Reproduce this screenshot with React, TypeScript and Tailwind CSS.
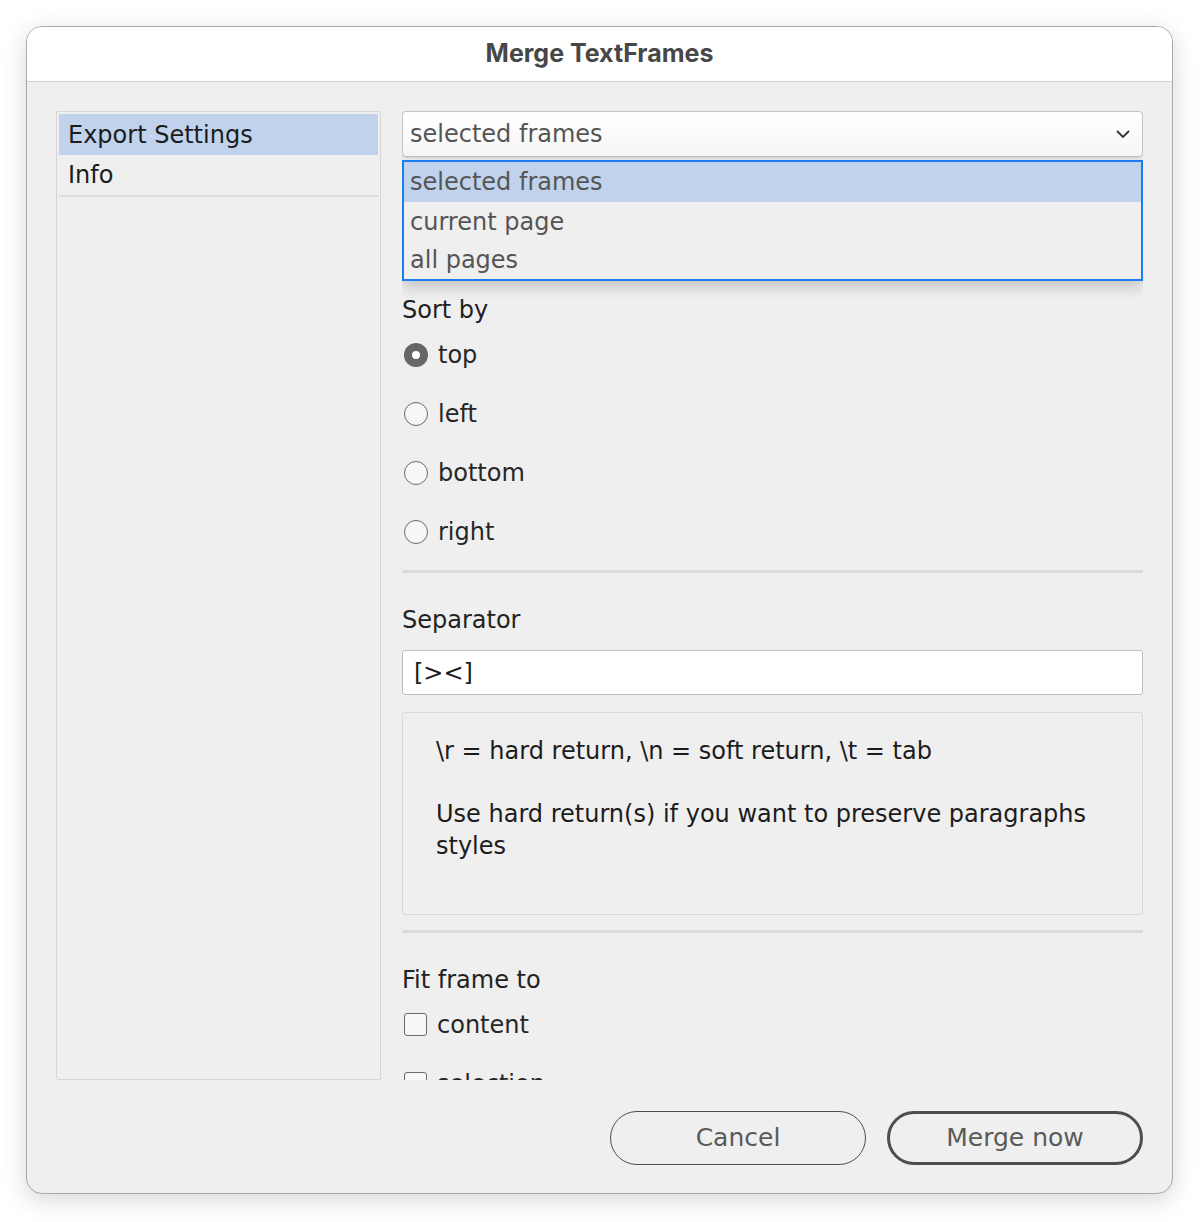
import React from "react";

const font = { fontFamily: '"DejaVu Sans", Verdana, sans-serif' };

const Radio = ({ checked, label }: { checked?: boolean; label: string }) => (
  <div className="h-[59px] shrink-0 flex items-center gap-[10px] pl-[2px]">
    {checked ? (
      <div className="w-[24px] h-[24px] rounded-full bg-[#666666] flex items-center justify-center">
        <div className="w-[8px] h-[8px] rounded-full bg-white" />
      </div>
    ) : (
      <div className="w-[24px] h-[24px] rounded-full border-[1.5px] border-[#6a6a6a] bg-[#f7f7f7]" />
    )}
    <span className="text-[24px] text-[#262626]">{label}</span>
  </div>
);

const Check = ({ label }: { label: string }) => (
  <div className="h-[59px] shrink-0 flex items-center gap-[10px] pl-[2px]">
    <div className="w-[23px] h-[23px] rounded-[3px] border-[1.5px] border-[#6a6a6a] bg-[#f7f7f7]" />
    <span className="text-[24px] text-[#262626]">{label}</span>
  </div>
);

const Label = ({ children }: { children: React.ReactNode }) => (
  <div className="h-[30px] flex items-center text-[24px] text-[#222222]">{children}</div>
);

const Rule = () => <div className="h-[3px] bg-[#dadada]" />;

export default function App() {
  return (
    <div className="w-[1200px] h-[1222px] bg-white pt-[26px] pl-[26px]" style={font}>
      <div className="w-[1147px] h-[1168px] rounded-[16px] border border-[#a9a9a9] bg-[#efefef] overflow-hidden shadow-[0_6px_24px_rgba(0,0,0,0.16)] flex flex-col">
        {/* title bar */}
        <div className="h-[55px] shrink-0 bg-white border-b border-[#d2d2d2] flex items-center justify-center">
          <span className="text-[25px] font-bold text-[#474747]" style={{ fontFamily: "Inter, sans-serif" }}>
            Merge TextFrames
          </span>
        </div>

        <div className="flex-1 pt-[29px] px-[29px] flex flex-col">
          <div className="h-[969px] shrink-0 flex gap-[21px]">
            {/* sidebar */}
            <div className="w-[325px] shrink-0 border border-[#d5d5d5] rounded-[2px] p-[2px]">
              <div className="h-[41px] bg-[#c0d2ec] flex items-center pl-[9px] text-[24px] text-[#1c1c1c]">
                Export Settings
              </div>
              <div className="h-[42px] border-b-2 border-[#dcdcdc] flex items-center pl-[9px] text-[24px] text-[#1c1c1c]">
                Info
              </div>
            </div>

            {/* main column */}
            <div className="flex-1 relative overflow-hidden flex flex-col">
              <div className="h-[46px] shrink-0 rounded-[4px] border border-[#c3c3c3] bg-gradient-to-b from-white to-[#f6f6f6] shadow-[0_1px_2px_rgba(0,0,0,0.12)] flex items-center justify-between pl-[7px] pr-[11px]">
                <span className="text-[24px] text-[#555555]">selected frames</span>
                <svg width="16" height="10" viewBox="0 0 16 10">
                  <path d="M2 2 L8 8 L14 2" fill="none" stroke="#333" strokeWidth="1.8" />
                </svg>
              </div>

              <div className="mt-[138px] shrink-0">
                <Label>Sort by</Label>
              </div>
              <Radio checked label="top" />
              <Radio label="left" />
              <Radio label="bottom" />
              <Radio label="right" />
              <div className="mt-[9px] shrink-0">
                <Rule />
              </div>

              <div className="mt-[32px] shrink-0">
                <Label>Separator</Label>
              </div>
              <div className="mt-[15px] h-[45px] shrink-0 bg-white border border-[#bdbdbd] rounded-[3px] flex items-center pl-[11px] text-[24px] text-[#1c1c1c]">
                [&gt;&lt;]
              </div>
              <div className="mt-[17px] h-[203px] shrink-0 border border-[#d8d8d8] rounded-[3px] pl-[33px] pt-[22px] text-[24px] leading-[32px] text-[#1c1c1c]">
                <div className="whitespace-nowrap">\r = hard return, \n = soft return, \t = tab</div>
                <div className="h-[31px]" />
                <div className="whitespace-nowrap">Use hard return(s) if you want to preserve paragraphs</div>
                <div>styles</div>
              </div>
              <div className="mt-[15px] shrink-0">
                <Rule />
              </div>

              <div className="mt-[32px] shrink-0">
                <Label>Fit frame to</Label>
              </div>
              <Check label="content" />
              <Check label="selection" />

              {/* open dropdown list */}
              <div className="absolute left-0 right-0 top-[49px] h-[121px] border-2 border-[#1b7cf0] bg-[#efefef] shadow-[0_6px_14px_rgba(0,0,0,0.18)]">
                <div className="h-[40px] bg-[#c0d2ec] flex items-center pl-[6px] text-[24px] text-[#555555]">selected frames</div>
                <div className="h-[39px] flex items-center pl-[6px] text-[24px] text-[#555555]">current page</div>
                <div className="h-[38px] flex items-center pl-[6px] text-[24px] text-[#555555]">all pages</div>
              </div>
            </div>
          </div>

          <div className="mt-[31px] flex justify-end gap-[21px]">
            <button className="w-[256px] h-[54px] rounded-full border-[1.5px] border-[#4d4d4d] text-[25px] text-[#5a5a5a]">
              Cancel
            </button>
            <button className="w-[256px] h-[54px] rounded-full border-[3px] border-[#4d4d4d] text-[25px] text-[#5a5a5a]">
              Merge now
            </button>
          </div>
        </div>
      </div>
    </div>
  );
}
